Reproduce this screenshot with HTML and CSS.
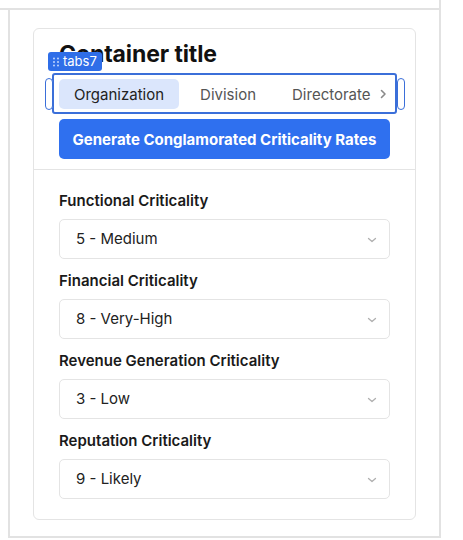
FILE: index.html
```html
<!DOCTYPE html>
<html>
<head>
<meta charset="utf-8">
<link rel="stylesheet" href="styles.css">
</head>
<body>
<div class="prev"></div>
<div class="frame">
  <div class="card">
    <div class="head">
      <h1 class="title">Container title</h1>
      <div class="tabs">
        <div class="sel-outline"></div>
        <div class="handle handle-l"></div>
        <div class="handle handle-r"></div>
        <div class="badge">
          <svg class="dots" width="6" height="10" viewBox="0 0 6 10"><circle cx="1" cy="1.5" r="0.9"/><circle cx="5" cy="1.5" r="0.9"/><circle cx="1" cy="5" r="0.9"/><circle cx="5" cy="5" r="0.9"/><circle cx="1" cy="8.5" r="0.9"/><circle cx="5" cy="8.5" r="0.9"/></svg>
          <span>tabs7</span>
        </div>
        <div class="tab-list">
          <div class="tab active">Organization</div>
          <div class="tab">Division</div>
          <div class="tab">Directorate</div>
        </div>
        <svg class="tab-next" width="8" height="10" viewBox="0 0 8 10"><path d="M2.5 1.5 L6 5 L2.5 8.5" fill="none" stroke="#8a8a8a" stroke-width="1.6" stroke-linecap="round" stroke-linejoin="round"/></svg>
      </div>
      <button class="btn">Generate Conglamorated Criticality Rates</button>
    </div>
    <div class="divider"></div>
    <div class="form">
      <div class="field">
        <div class="label">Functional Criticality</div>
        <div class="select"><span>5 - Medium</span><svg class="chev" width="10" height="6" viewBox="0 0 10 6"><path d="M1.5 1.5 L5 4.5 L8.5 1.5" fill="none" stroke="#b0b0b0" stroke-width="1.3" stroke-linecap="round" stroke-linejoin="round"/></svg></div>
      </div>
      <div class="field">
        <div class="label">Financial Criticality</div>
        <div class="select"><span>8 - Very-High</span><svg class="chev" width="10" height="6" viewBox="0 0 10 6"><path d="M1.5 1.5 L5 4.5 L8.5 1.5" fill="none" stroke="#b0b0b0" stroke-width="1.3" stroke-linecap="round" stroke-linejoin="round"/></svg></div>
      </div>
      <div class="field">
        <div class="label">Revenue Generation Criticality</div>
        <div class="select"><span>3 - Low</span><svg class="chev" width="10" height="6" viewBox="0 0 10 6"><path d="M1.5 1.5 L5 4.5 L8.5 1.5" fill="none" stroke="#b0b0b0" stroke-width="1.3" stroke-linecap="round" stroke-linejoin="round"/></svg></div>
      </div>
      <div class="field">
        <div class="label">Reputation Criticality</div>
        <div class="select"><span>9 - Likely</span><svg class="chev" width="10" height="6" viewBox="0 0 10 6"><path d="M1.5 1.5 L5 4.5 L8.5 1.5" fill="none" stroke="#b0b0b0" stroke-width="1.3" stroke-linecap="round" stroke-linejoin="round"/></svg></div>
      </div>
    </div>
  </div>
</div>
</body>
</html>
```
FILE: styles.css
```css
* { box-sizing: border-box; }
body {
  margin: 0;
  font-family: Inter, "Noto Sans", sans-serif;
  color: #1a1a1a;
  background: #fff;
}
.prev {
  width: 441px;
  height: 10px;
  border-right: 2px solid #e2e2e2;
  border-bottom: 2px solid #e2e2e2;
}
.frame {
  margin-left: 8px;
  width: 433px;
  height: 528px;
  border: 2px solid #e2e2e2;
  border-top: none;
  padding: 18px 0 0 23px;
}
.card {
  width: 383px;
  border: 1px solid #e4e4e4;
  border-radius: 6px;
  background: #fff;
}
.head {
  padding: 11px 25px 10px;
}
.title {
  margin: 0 0 11px;
  font-size: 23px;
  line-height: 28px;
  font-weight: 700;
  color: #111;
  letter-spacing: -0.1px;
}
.tabs {
  position: relative;
  height: 30px;
  display: flex;
  align-items: center;
}
.sel-outline {
  position: absolute;
  top: -6px;
  bottom: -5px;
  left: -7px;
  right: -7px;
  border: 2px solid #3b6fd9;
  border-radius: 3px;
}
.handle {
  position: absolute;
  top: -1px;
  width: 8px;
  height: 32px;
  background: #fff;
  border: 1px solid #3b6fd9;
  border-radius: 4px;
}
.handle-l { left: -14px; }
.handle-r { right: -15px; }
.badge {
  position: absolute;
  left: -11px;
  top: -27px;
  height: 19px;
  width: 54px;
  background: #2f6ee8;
  border-radius: 3px;
  color: #fff;
  font-size: 13px;
  line-height: 19px;
  display: flex;
  align-items: center;
  gap: 4px;
  padding-left: 5px;
  z-index: 2;
}
.dots { fill: #cfe0ff; }
.tab-list {
  display: flex;
  gap: 6px;
  flex: 1;
  overflow: hidden;
  height: 30px;
}
.tab {
  height: 30px;
  line-height: 30px;
  padding: 1px 15px 0;
  font-size: 15px;
  color: #555;
  border-radius: 5px;
  white-space: nowrap;
}
.tab.active {
  background: #dbe6fc;
  color: #222;
}
.tab-next {
  position: absolute;
  right: 3px;
  top: 10px;
}
.btn {
  display: block;
  width: 100%;
  height: 40px;
  margin-top: 10px;
  border: none;
  border-radius: 5px;
  background: #2f70ef;
  color: #fff;
  font-family: Inter, "Noto Sans", sans-serif;
  font-size: 15px;
  font-weight: 700;
}
.divider {
  height: 1px;
  background: #e4e4e4;
}
.form {
  padding: 19px 25px 20px;
  display: flex;
  flex-direction: column;
  gap: 10px;
}
.field {
  display: flex;
  flex-direction: column;
  gap: 8px;
}
.label {
  height: 22px;
  padding-top: 2px;
  font-size: 15px;
  line-height: 20px;
  font-weight: 600;
  color: #1a1a1a;
}
.select {
  height: 40px;
  border: 1px solid #e4e4e4;
  border-radius: 5px;
  display: flex;
  align-items: center;
  justify-content: space-between;
  padding: 0 12px 0 16px;
  font-size: 15px;
  color: #222;
}
.select span { margin-top: -1px; }
.chev { margin-top: 1px; }
```
